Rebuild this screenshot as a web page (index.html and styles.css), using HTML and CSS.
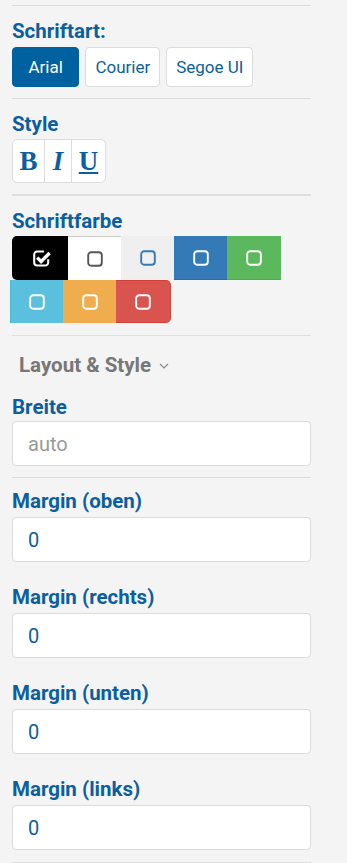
FILE: index.html
```html
<!DOCTYPE html>
<html lang="de">
<head>
<meta charset="utf-8">
<link rel="stylesheet" href="styles.css">
</head>
<body>
<div class="panel">
  <hr class="sep">
  <section class="block block-font">
    <div class="label">Schriftart:</div>
    <div class="btn-row">
      <button class="btn active">Arial</button>
      <button class="btn">Courier</button>
      <button class="btn">Segoe UI</button>
    </div>
  </section>
  <hr class="sep">
  <section class="block block-style">
    <div class="label">Style</div>
    <div class="biu">
      <span class="biu-b">B</span>
      <span class="biu-i">I</span>
      <span class="biu-u">U</span>
    </div>
  </section>
  <hr class="sep thick">
  <section class="block block-color">
    <div class="label">Schriftfarbe</div>
    <div class="swatches">
      <div class="sw-row">
        <span class="sw sw-black first">
          <svg class="ico check" viewBox="0 0 19 19"><path d="M12 2.5H5.2a3 3 0 0 0-3 3v8a3 3 0 0 0 3 3h8a3 3 0 0 0 3-3v-3.2" fill="none" stroke="#fff" stroke-width="2.1"/><path d="M5.2 8.6l3.9 3.9L17.6 4" fill="none" stroke="#fff" stroke-width="3.4"/></svg>
        </span>
        <span class="sw sw-white"><svg class="ico" viewBox="0 0 16 16"><rect x="1.2" y="1.2" width="13.6" height="13.6" rx="3" fill="none" stroke="#555" stroke-width="1.9"/></svg></span>
        <span class="sw sw-light"><svg class="ico" viewBox="0 0 16 16"><rect x="1.2" y="1.2" width="13.6" height="13.6" rx="3" fill="none" stroke="#337ab7" stroke-width="1.9"/></svg></span>
        <span class="sw sw-blue"><svg class="ico" viewBox="0 0 16 16"><rect x="1.2" y="1.2" width="13.6" height="13.6" rx="3" fill="none" stroke="#fff" stroke-width="1.9"/></svg></span>
        <span class="sw sw-green"><svg class="ico" viewBox="0 0 16 16"><rect x="1.2" y="1.2" width="13.6" height="13.6" rx="3" fill="none" stroke="#fff" stroke-width="1.9"/></svg></span>
      </div>
      <div class="sw-row second">
        <span class="sw sw-cyan"><svg class="ico" viewBox="0 0 16 16"><rect x="1.2" y="1.2" width="13.6" height="13.6" rx="3" fill="none" stroke="#fff" stroke-width="1.9"/></svg></span>
        <span class="sw sw-orange"><svg class="ico" viewBox="0 0 16 16"><rect x="1.2" y="1.2" width="13.6" height="13.6" rx="3" fill="none" stroke="#fff" stroke-width="1.9"/></svg></span>
        <span class="sw sw-red last"><svg class="ico" viewBox="0 0 16 16"><rect x="1.2" y="1.2" width="13.6" height="13.6" rx="3" fill="none" stroke="#fff" stroke-width="1.9"/></svg></span>
      </div>
    </div>
  </section>
  <hr class="sep">
  <div class="toggle">Layout &amp; Style<svg class="chev" viewBox="0 0 10 6"><path d="M1 1l4 4 4-4" fill="none" stroke="#888" stroke-width="1.1"/></svg></div>
  <section class="block block-width">
    <div class="label lab-field">Breite</div>
    <div class="input placeholder">auto</div>
  </section>
  <hr class="sep">
  <section class="block block-margins">
    <div class="field">
      <div class="label lab-field">Margin (oben)</div>
      <div class="input">0</div>
    </div>
    <div class="field">
      <div class="label lab-field">Margin (rechts)</div>
      <div class="input">0</div>
    </div>
    <div class="field">
      <div class="label lab-field">Margin (unten)</div>
      <div class="input">0</div>
    </div>
    <div class="field">
      <div class="label lab-field">Margin (links)</div>
      <div class="input">0</div>
    </div>
  </section>
  <hr class="sep">
</div>
</body>
</html>
```

FILE: styles.css
```css
html, body {
  margin: 0;
  padding: 0;
  background: #f4f4f4;
}
body {
  font-family: Roboto, "Liberation Sans", Arial, sans-serif;
  color: #0b5f9e;
}
.panel {
  width: 299px;
  padding: 5px 36px 0 12px;
}
.sep {
  border: 0;
  margin: 0;
  height: 1px;
  background: #dedede;
}
.sep.thick {
  height: 2px;
}
.label {
  font-size: 20.5px;
  line-height: 22px;
  font-weight: 700;
  color: #0b5f9e;
}
.block-font {
  padding: 14px 0 11px;
}
.block-font .label {
  margin-bottom: 5px;
}
.btn-row {
  display: flex;
  gap: 6px;
}
.btn {
  height: 40px;
  box-sizing: border-box;
  padding: 0 9px;
  border: 1px solid #dcdcdc;
  border-radius: 4px;
  background: #fff;
  color: #0b5f9e;
  font-family: Roboto, "Liberation Sans", sans-serif;
  font-size: 17px;
}
.btn.active {
  background: #0061a0;
  border-color: #0061a0;
  color: #fff;
  padding: 0 15.5px;
}
.block-style {
  padding: 14px 0 11px;
}
.block-style .label {
  margin-bottom: 4px;
}
.biu {
  display: inline-flex;
  height: 44px;
  box-sizing: border-box;
  border: 1px solid #dcdcdc;
  border-radius: 5px;
  background: #fff;
  font-family: "Liberation Serif", "Times New Roman", serif;
  font-weight: 700;
  font-size: 27px;
  color: #0b5f9e;
}
.biu span {
  display: flex;
  align-items: center;
  justify-content: center;
}
.biu-b { width: 31px; border-right: 1px solid #dcdcdc; }
.biu-i { width: 26px; border-right: 1px solid #dcdcdc; font-style: italic; }
.biu-u { width: 33px; text-decoration: underline; text-decoration-thickness: 2px; text-underline-offset: 2px; }
.block-color {
  padding: 14px 0 12px;
}
.block-color .label {
  margin-bottom: 4px;
}
.sw-row {
  display: flex;
}
.sw-row.second {
  margin-left: -2px;
}
.sw {
  display: flex;
  align-items: center;
  justify-content: center;
  width: 53px;
  height: 44px;
  box-sizing: border-box;
}
.sw-row.second .sw {
  height: 43px;
}
.ico {
  width: 16px;
  height: 16px;
  display: block;
}
.ico.check {
  width: 19px;
  height: 19px;
  margin-left: 2px;
}
.sw-black { background: #000; width: 56px; }
.sw.first { border-radius: 5px 0 0 5px; }
.sw-white { background: #fff; border-top: 1px solid #ccc; }
.sw-light { background: #efefef; }
.sw-blue { background: #337ab7; border-bottom: 1px solid #2e6da4; }
.sw-green { background: #5cb85c; width: 54px; border-bottom: 1px solid #4cae4c; }
.sw-cyan { background: #5bc0de; border-left: 1px solid #46b8da; }
.sw-orange { background: #f0ad4e; }
.sw-red { background: #d9534f; width: 55px; border: 1px solid #d43f3a; border-left: 0; }
.sw.last { border-radius: 0 5px 5px 0; }
.toggle {
  padding: 18px 0 20px 7px;
  font-size: 20.5px;
  line-height: 22px;
  font-weight: 700;
  color: #777;
  display: flex;
  align-items: center;
}
.chev {
  width: 10px;
  height: 6px;
  margin-left: 8px;
  margin-top: 2px;
}
.block-width {
  padding: 0 0 11px;
}
.block-width .label {
  margin-bottom: 3px;
}
.input {
  height: 45px;
  box-sizing: border-box;
  border: 1px solid #dcdcdc;
  border-radius: 4px;
  background: #fff;
  padding-left: 15px;
  display: flex;
  align-items: center;
  font-size: 20px;
  color: #0b5f9e;
}
.input.placeholder {
  color: #999;
}
.block-margins {
  padding: 12px 0 12px;
}
.field + .field {
  margin-top: 24px;
}
.field .label {
  margin-bottom: 5px;
}
```
